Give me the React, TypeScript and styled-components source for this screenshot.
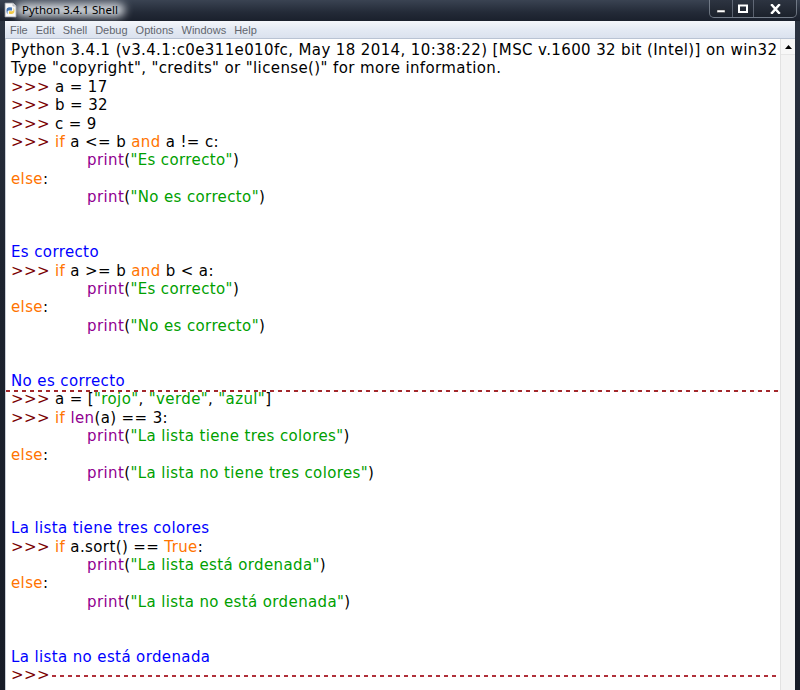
import React from "react"
import styled, { createGlobalStyle } from "styled-components"

const GlobalStyle = createGlobalStyle`
  html, body {
    margin: 0;
    padding: 0;
    background: #1c2230;
    overflow: hidden;
  }
`

const Window = styled.div`
  width: 800px;
  height: 690px;
  display: flex;
  flex-direction: column;
  background: linear-gradient(180deg, #2c3442 0%, #1d232f 40%, #171c27 100%);
  overflow: hidden;
`

const TitleBar = styled.div`
  height: 21px;
  flex: none;
  display: flex;
  align-items: flex-start;
  padding-left: 3px;
  background: linear-gradient(180deg, #3a4352 0%, #232a37 60%, #1a202c 100%);
`

const AppIcon = styled.svg`
  width: 16px;
  height: 16px;
  margin-top: 2px;
  flex: none;
`

const TitleText = styled.span`
  position: relative;
  z-index: 0;
  margin-left: 3px;
  margin-top: 3px;
  font-family: "Noto Sans", "Open Sans", sans-serif;
  font-size: 11.5px;
  line-height: 14px;
  color: #000;

  &::before {
    content: "";
    position: absolute;
    inset: 0 -7px;
    z-index: -1;
    border-radius: 10px;
    background: rgba(235, 238, 243, 0.85);
    filter: blur(4px);
  }
`

const CaptionGroup = styled.div`
  margin-left: auto;
  margin-right: 3px;
  display: flex;
  height: 17px;
  border: 1px solid rgba(200, 210, 225, 0.45);
  border-top: none;
  border-radius: 0 0 5px 5px;
  overflow: hidden;
  background: linear-gradient(180deg, #2d3441 0%, #1b212b 100%);
`

const CaptionButton = styled.div<{ $w: number }>`
  width: ${(p) => p.$w}px;
  display: flex;
  align-items: center;
  justify-content: center;
  border-left: 1px solid rgba(200, 210, 225, 0.35);
  &:first-child {
    border-left: none;
  }
`

const Frame = styled.div`
  flex: 1;
  display: flex;
  flex-direction: column;
  padding: 0 5px 0 5px;
  min-height: 0;
`

const MenuBar = styled.div`
  height: 17px;
  flex: none;
  display: flex;
  align-items: center;
  gap: 8px;
  padding-left: 5px;
  background: linear-gradient(180deg, #f4f6fa 0%, #e3e9f3 55%, #dbe2ee 100%);
  border-bottom: 1px solid #b9c3d3;
`

const MenuItem = styled.span`
  font-family: "Liberation Sans", Arial, sans-serif;
  font-size: 11px;
  color: #62666e;
`

const Body = styled.div`
  flex: 1;
  display: flex;
  min-height: 0;
  background: #fff;
`

const TextArea = styled.div`
  flex: 1;
  padding: 2px 0 0 5px;
  border-left: 1px solid #c9ced6;
  font-family: "DejaVu Sans", Verdana, sans-serif;
  font-size: 15px;
  letter-spacing: 0.38px;
  overflow: hidden;
`

const Line = styled.div<{ $indent?: boolean; $dashed?: boolean }>`
  height: 18.4px;
  line-height: 18.4px;
  white-space: pre;
  color: #000;
  padding-left: ${(p) => (p.$indent ? "76px" : "0")};
  position: relative;
  ${(p) =>
    p.$dashed &&
    `
    &::after {
      content: "";
      position: absolute;
      left: -5px;
      right: 0;
      bottom: -2px;
      height: 2px;
      background: repeating-linear-gradient(90deg, #a3282c 0 4px, transparent 4px 8px);
    }
  `}
`

const PromptRow = styled.div`
  height: 18.4px;
  line-height: 18.4px;
  display: flex;
  align-items: center;
`

const DashFill = styled.div`
  flex: 1;
  height: 2px;
  margin-left: 2px;
  margin-top: 1px;
  background: repeating-linear-gradient(90deg, #b0303a 0 4px, transparent 4px 8px);
`

const colors: Record<string, string> = {
  n: "#000000",
  p: "#7a0000",
  k: "#ff7400",
  b: "#900090",
  s: "#00a000",
  o: "#0000ff",
}

const Tok = styled.span<{ $t: string }>`
  color: ${(p) => colors[p.$t]};
`

const Scrollbar = styled.div`
  width: 14px;
  flex: none;
  background: #f3f3f3;
  border-left: 1px solid #e2e2e2;
  display: flex;
  flex-direction: column;
`

const ScrollUp = styled.div`
  height: 15px;
  display: flex;
  align-items: center;
  justify-content: center;
  border-bottom: 1px solid #e6e6e6;
  background: #f7f7f7;
`

type Token = [string, string]
type CodeLine = { tokens: Token[]; indent?: boolean; dashed?: boolean }

const P: Token = ["p", ">>> "]
const printLine = (text: string): CodeLine => ({
  indent: true,
  tokens: [
    ["b", "print"],
    ["n", "("],
    ["s", `"${text}"`],
    ["n", ")"],
  ],
})
const elseLine: CodeLine = { tokens: [["k", "else"], ["n", ":"]] }
const blank: CodeLine = { tokens: [] }

const lines: CodeLine[] = [
  { tokens: [["n", "Python 3.4.1 (v3.4.1:c0e311e010fc, May 18 2014, 10:38:22) [MSC v.1600 32 bit (Intel)] on win32"]] },
  { tokens: [["n", 'Type "copyright", "credits" or "license()" for more information.']] },
  { tokens: [P, ["n", "a = 17"]] },
  { tokens: [P, ["n", "b = 32"]] },
  { tokens: [P, ["n", "c = 9"]] },
  { tokens: [P, ["k", "if"], ["n", " a <= b "], ["k", "and"], ["n", " a != c:"]] },
  printLine("Es correcto"),
  elseLine,
  printLine("No es correcto"),
  blank,
  blank,
  { tokens: [["o", "Es correcto"]] },
  { tokens: [P, ["k", "if"], ["n", " a >= b "], ["k", "and"], ["n", " b < a:"]] },
  printLine("Es correcto"),
  elseLine,
  printLine("No es correcto"),
  blank,
  blank,
  { tokens: [["o", "No es correcto"]], dashed: true },
  {
    tokens: [
      P,
      ["n", "a = ["],
      ["s", '"rojo"'],
      ["n", ", "],
      ["s", '"verde"'],
      ["n", ", "],
      ["s", '"azul"'],
      ["n", "]"],
    ],
  },
  { tokens: [P, ["k", "if"], ["n", " "], ["b", "len"], ["n", "(a) == 3:"]] },
  printLine("La lista tiene tres colores"),
  elseLine,
  printLine("La lista no tiene tres colores"),
  blank,
  blank,
  { tokens: [["o", "La lista tiene tres colores"]] },
  { tokens: [P, ["k", "if"], ["n", " a.sort() == "], ["k", "True"], ["n", ":"]] },
  printLine("La lista está ordenada"),
  elseLine,
  printLine("La lista no está ordenada"),
  blank,
  blank,
  { tokens: [["o", "La lista no está ordenada"]] },
]

const menus = ["File", "Edit", "Shell", "Debug", "Options", "Windows", "Help"]

const PythonIcon = () => (
  <AppIcon viewBox="0 0 16 16">
    <path d="M2 1 H10 L13 4 V15 H2 Z" fill="#fafafa" stroke="#8a8f99" strokeWidth="0.8" />
    <path d="M10 1 V4 H13" fill="#e0e0e0" stroke="#8a8f99" strokeWidth="0.6" />
    <path d="M3.5 8 C3.5 6 5 5 7 5.2 L9 5.4 V8.5 H6 C5 8.5 4.5 9 4.5 10 V12 C3.8 11.5 3.5 10 3.5 8 Z" fill="#3b6fb0" />
    <path d="M11.5 9 C11.5 11 10 12.2 8 12 L6 11.8 V9.2 H9 C10 9.2 10.5 8.6 10.5 7.6 V6 C11.2 6.6 11.5 7.6 11.5 9 Z" fill="#f2c531" />
  </AppIcon>
)

export default function App() {
  return (
    <>
      <GlobalStyle />
      <Window>
        <TitleBar>
          <PythonIcon />
          <TitleText>Python 3.4.1 Shell</TitleText>
          <CaptionGroup>
            <CaptionButton $w={22}>
              <svg width="10" height="10" viewBox="0 0 10 10">
                <rect x="1" y="6" width="8" height="2.5" fill="#fff" stroke="#333" strokeWidth="0.5" />
              </svg>
            </CaptionButton>
            <CaptionButton $w={20}>
              <svg width="10" height="10" viewBox="0 0 10 10">
                <rect x="1" y="1.5" width="8" height="6.5" fill="none" stroke="#fff" strokeWidth="2" />
              </svg>
            </CaptionButton>
            <CaptionButton $w={42}>
              <svg width="11" height="10" viewBox="0 0 11 10">
                <path d="M2 1 L9 9 M9 1 L2 9" stroke="#fff" strokeWidth="2.4" strokeLinecap="square" />
              </svg>
            </CaptionButton>
          </CaptionGroup>
        </TitleBar>
        <Frame>
          <MenuBar>
            {menus.map((m) => (
              <MenuItem key={m}>{m}</MenuItem>
            ))}
          </MenuBar>
          <Body>
            <TextArea>
              {lines.map((l, i) => (
                <Line key={i} $indent={l.indent} $dashed={l.dashed}>
                  {l.tokens.map(([t, text], j) => (
                    <Tok key={j} $t={t}>
                      {text}
                    </Tok>
                  ))}
                </Line>
              ))}
              <PromptRow>
                <Tok $t="p">&gt;&gt;&gt;</Tok>
                <DashFill />
              </PromptRow>
            </TextArea>
            <Scrollbar>
              <ScrollUp>
                <svg width="7" height="4" viewBox="0 0 7 4">
                  <path d="M0 4 L3.5 0 L7 4 Z" fill="#000" />
                </svg>
              </ScrollUp>
            </Scrollbar>
          </Body>
        </Frame>
      </Window>
    </>
  )
}
